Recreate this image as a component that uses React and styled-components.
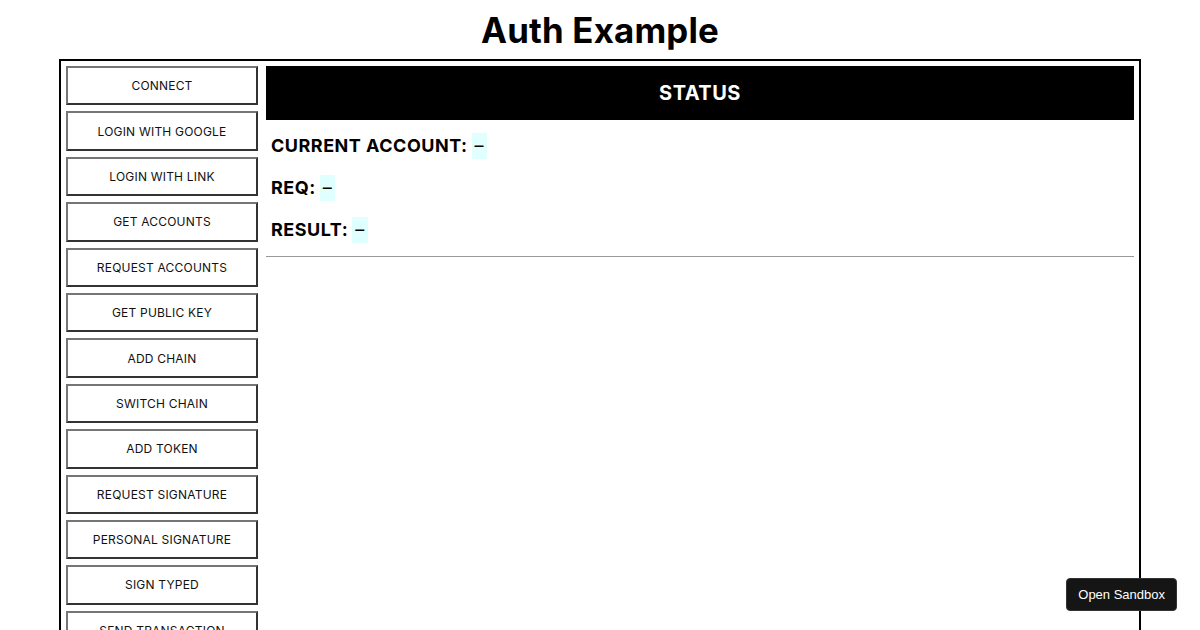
import React from "react";
import styled, { createGlobalStyle } from "styled-components";

const Global = createGlobalStyle`
  html, body { margin: 0; padding: 0; background: #fff; }
  body { font-family: "Inter", "Liberation Sans", sans-serif; color: #000; overflow: hidden; }
`;

const Page = styled.div`
  display: flex;
  flex-direction: column;
  align-items: center;
  height: 630px;
`;

const Title = styled.h1`
  margin: 11px 0 10px;
  font-family: "Inter", sans-serif;
  font-weight: 700;
  font-size: 34.8px;
  line-height: 38px;
  letter-spacing: 0.2px;
`;

const Frame = styled.div`
  box-sizing: border-box;
  width: 1082px;
  border: 2px solid #000;
  padding: 5px;
  display: flex;
  gap: 8px;
  align-items: flex-start;
  flex: 1;
`;

const Sidebar = styled.div`
  display: flex;
  flex-direction: column;
  gap: 6px;
  width: 192px;
  flex-shrink: 0;
`;

const ActionButton = styled.button`
  box-sizing: border-box;
  height: 39.4px;
  width: 100%;
  background: #fff;
  border: 2px solid #767676;
  border-right-color: #333;
  border-bottom-color: #333;
  font-family: "Inter", "Liberation Sans", sans-serif;
  font-size: 12px;
  letter-spacing: 0.2px;
  color: #111;
  text-transform: uppercase;
  cursor: pointer;
  padding: 0;
`;

const Status = styled.section`
  flex: 1;
  display: flex;
  flex-direction: column;
`;

const StatusHeader = styled.div`
  background: #000;
  color: #fff;
  height: 54px;
  display: flex;
  align-items: center;
  justify-content: center;
  font-weight: 700;
  font-size: 20px;
  letter-spacing: 0.5px;
`;

const Rows = styled.div`
  display: flex;
  flex-direction: column;
  gap: 16px;
  padding: 13px 5px 13px;
`;

const Row = styled.div`
  display: flex;
  align-items: center;
  font-weight: 700;
  font-size: 18px;
  line-height: 26px;
  letter-spacing: 0.5px;
`;

const Value = styled.span`
  background: #e0ffff;
  padding: 0 3px;
  margin-left: 4px;
  font-weight: 400;
`;

const Divider = styled.hr`
  margin: 0;
  border: 0;
  border-top: 1px solid #999;
  height: 0;
`;

const SandboxButton = styled.button`
  position: fixed;
  right: 23px;
  bottom: 19px;
  background: #151515;
  color: #fff;
  border: 1px solid #333;
  border-radius: 4px;
  padding: 0 11px;
  height: 33px;
  font-family: "Liberation Sans", Arial, sans-serif;
  font-size: 13px;
`;

const actions = [
  "Connect",
  "Login with Google",
  "Login with Link",
  "Get Accounts",
  "Request Accounts",
  "Get Public Key",
  "Add Chain",
  "Switch Chain",
  "Add Token",
  "Request Signature",
  "Personal Signature",
  "Sign Typed",
  "Send Transaction",
];

export default function App() {
  return (
    <>
      <Global />
      <Page>
        <Title>Auth Example</Title>
        <Frame>
          <Sidebar>
            {actions.map((a) => (
              <ActionButton key={a}>{a}</ActionButton>
            ))}
          </Sidebar>
          <Status>
            <StatusHeader>STATUS</StatusHeader>
            <Rows>
              <Row>CURRENT ACCOUNT:<Value>–</Value></Row>
              <Row>REQ:<Value>–</Value></Row>
              <Row>RESULT:<Value>–</Value></Row>
            </Rows>
            <Divider />
          </Status>
        </Frame>
      </Page>
      <SandboxButton>Open Sandbox</SandboxButton>
    </>
  );
}
